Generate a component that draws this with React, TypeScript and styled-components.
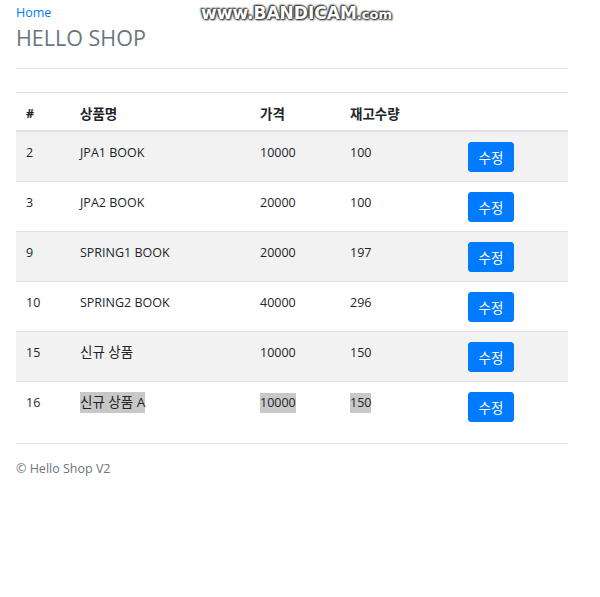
import React from "react";
import styled, { createGlobalStyle } from "styled-components";

const GlobalStyle = createGlobalStyle`
  body {
    margin: 0;
    background: #fff;
    font-family: "Open Sans", "Noto Sans CJK KR", sans-serif;
    font-size: 12.5px;
    color: #212529;
  }
`;

const Page = styled.div`
  position: relative;
  width: 600px;
  height: 597px;
  overflow: hidden;
`;

const Container = styled.div`
  width: 552px;
  margin-left: 16px;
  display: flex;
  flex-direction: column;
`;

const Header = styled.div`
  display: flex;
  flex-direction: column;
  padding-top: 4px;
  padding-bottom: 17px;
  border-bottom: 1px solid #e5e5e5;
`;

const HomeLink = styled.a`
  color: #007bff;
  text-decoration: none;
  font-size: 12.5px;
  line-height: 17px;
`;

const Title = styled.h3`
  margin: 4px 0 0;
  font-size: 21.5px;
  font-weight: 500;
  line-height: 26px;
  color: #6c757d;
`;

const Table = styled.table`
  margin-top: 23px;
  width: 100%;
  border-collapse: collapse;
  table-layout: fixed;
`;

const Th = styled.th<{ $w?: number }>`
  width: ${(p) => (p.$w ? `${p.$w - 20}px` : "auto")};
  text-align: left;
  font-weight: 700;
  padding: 12px 10px 6px;
  line-height: 18px;
  border-top: 1px solid #dee2e6;
  border-bottom: 2px solid #dee2e6;
  vertical-align: top;
`;

const Ko = styled.span`
  font-size: 13.5px;
`;

const Row = styled.tr<{ $striped: boolean }>`
  background: ${(p) => (p.$striped ? "#f2f2f2" : "#fff")};
`;

const Td = styled.td`
  padding: 10px 10px 9px;
  line-height: 21px;
  border-top: 1px solid #dee2e6;
  vertical-align: top;
`;

const Cell = styled.span<{ $on: boolean; $ko?: boolean }>`
  background: ${(p) => (p.$on ? "#c8c8c8" : "transparent")};
  font-size: ${(p) => (p.$ko ? "13.5px" : "inherit")};
  padding: 1px 0 2px;
`;

const EditButton = styled.button`
  display: block;
  font-family: "Noto Sans CJK KR", sans-serif;
  font-size: 13.5px;
  color: #fff;
  background: #007bff;
  border: 1px solid #007bff;
  border-radius: 3px;
  width: 46px;
  height: 30px;
  padding: 0;
  cursor: pointer;
`;

const Footer = styled.div`
  margin-top: 12px;
  border-top: 1px solid #e5e5e5;
  padding-top: 16px;
  color: #6c757d;
  font-size: 12.5px;
  line-height: 18px;
`;

const Watermark = styled.div`
  position: absolute;
  top: 3px;
  left: 201px;
  font-family: "DejaVu Sans", sans-serif;
  font-weight: 700;
  font-size: 17px;
  color: #fff;
  text-shadow: 0 0 2px #333, 0 0 2px #333, 1px 1px 2px #222, -1px -1px 2px #222;
`;

const Small = styled.span`
  font-size: 13px;
`;

type Item = { id: number; name: string; price: number; stock: number };

const items: Item[] = [
  { id: 2, name: "JPA1 BOOK", price: 10000, stock: 100 },
  { id: 3, name: "JPA2 BOOK", price: 20000, stock: 100 },
  { id: 9, name: "SPRING1 BOOK", price: 20000, stock: 197 },
  { id: 10, name: "SPRING2 BOOK", price: 40000, stock: 296 },
  { id: 15, name: "신규 상품", price: 10000, stock: 150 },
  { id: 16, name: "신규 상품 A", price: 10000, stock: 150 },
];

const hasKorean = (s: string) => /[가-힣]/.test(s);

const App: React.FC = () => {
  return (
    <Page>
      <GlobalStyle />
      <Container>
        <Header>
          <HomeLink href="#">Home</HomeLink>
          <Title>HELLO SHOP</Title>
        </Header>
        <Table>
          <thead>
            <tr>
              <Th $w={54}>#</Th>
              <Th $w={180}>
                <Ko>상품명</Ko>
              </Th>
              <Th $w={90}>
                <Ko>가격</Ko>
              </Th>
              <Th $w={118}>
                <Ko>재고수량</Ko>
              </Th>
              <Th></Th>
            </tr>
          </thead>
          <tbody>
            {items.map((item, i) => {
              const sel = item.id === 16;
              return (
                <Row key={item.id} $striped={i % 2 === 0}>
                  <Td>{item.id}</Td>
                  <Td>
                    <Cell $on={sel} $ko={hasKorean(item.name)}>
                      {item.name}
                    </Cell>
                  </Td>
                  <Td>
                    <Cell $on={sel}>{item.price}</Cell>
                  </Td>
                  <Td>
                    <Cell $on={sel}>{item.stock}</Cell>
                  </Td>
                  <Td>
                    <EditButton>수정</EditButton>
                  </Td>
                </Row>
              );
            })}
          </tbody>
        </Table>
        <Footer>© Hello Shop V2</Footer>
      </Container>
      <Watermark>
        www.BANDICAM<Small>.com</Small>
      </Watermark>
    </Page>
  );
};

export default App;
